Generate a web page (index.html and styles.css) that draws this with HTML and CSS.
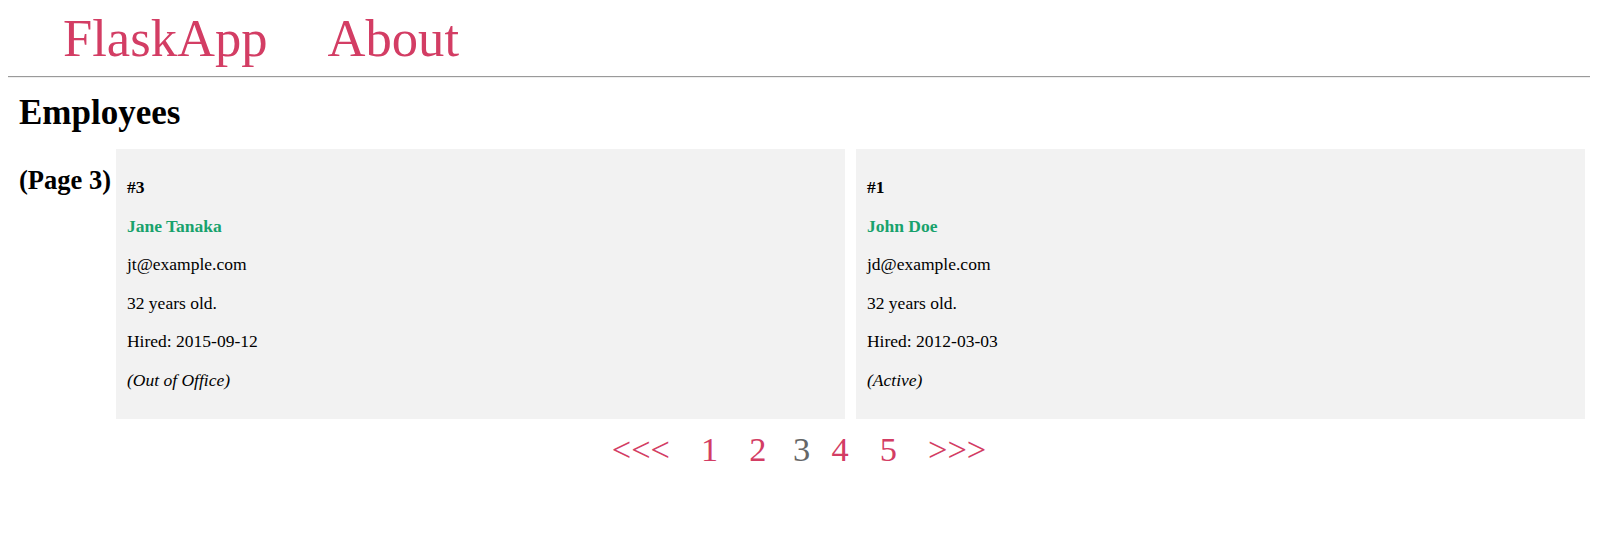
FILE: index.html
```html
<!DOCTYPE html>
<html lang="en">
<head>
<meta charset="utf-8">
<title>FlaskApp</title>
<link rel="stylesheet" href="styles.css">
</head>
<body>
<nav class="nav">
  <a class="nav-link" href="#">FlaskApp</a>
  <a class="nav-link" href="#">About</a>
</nav>
<hr class="rule">
<main class="main">
  <h1 class="title">Employees</h1>
  <div class="content">
    <h2 class="page-label">(Page 3)</h2>
    <div class="cards">
      <div class="card">
        <p class="emp-id">#3</p>
        <p class="emp-name">Jane Tanaka</p>
        <p>jt@example.com</p>
        <p>32 years old.</p>
        <p>Hired: 2015-09-12</p>
        <p class="emp-status">(Out of Office)</p>
      </div>
      <div class="card">
        <p class="emp-id">#1</p>
        <p class="emp-name">John Doe</p>
        <p>jd@example.com</p>
        <p>32 years old.</p>
        <p>Hired: 2012-03-03</p>
        <p class="emp-status">(Active)</p>
      </div>
    </div>
  </div>
</main>
<div class="pagination">
  <a class="page-link" href="#">&lt;&lt;&lt;</a>
  <a class="page-link" href="#">1</a>
  <a class="page-link" href="#">2</a>
  <span class="page-current">3</span>
  <a class="page-link" href="#">4</a>
  <a class="page-link" href="#">5</a>
  <a class="page-link" href="#">&gt;&gt;&gt;</a>
</div>
</body>
</html>
```
FILE: styles.css
```css
html, body {
  background: #ffffff;
}

body {
  margin: 8px;
  font-family: "Liberation Serif", "Times New Roman", serif;
  font-size: 17.5px;
  color: #000;
}

.nav {
  display: flex;
  gap: 60px;
  padding-left: 55px;
  font-size: 52.6px;
  line-height: normal;
}

.nav-link {
  color: #d33d64;
  text-decoration: none;
}

.rule {
  margin: 8px 0 0;
  border: none;
  border-top: 1px solid #9a9a9a;
  border-bottom: 1px solid #eeeeee;
  height: 0;
}

.main {
  padding: 0 5px 0 11px;
}

.title {
  margin: 15px 0 16px;
  font-size: 35px;
  font-weight: bold;
  line-height: normal;
}

.content {
  display: flex;
  align-items: flex-start;
}

.page-label {
  margin: 16px 5px 0 0;
  font-size: 26.5px;
  font-weight: bold;
  line-height: normal;
  white-space: nowrap;
}

.cards {
  flex: 1;
  display: grid;
  grid-template-columns: 1fr 1fr;
  gap: 11px;
}

.card {
  background: #f2f2f2;
  padding: 11px;
}

.card p {
  margin: 17.2px 0;
  line-height: 21.3px;
}

.emp-id {
  font-weight: bold;
}

.emp-name {
  font-weight: bold;
  color: #18a26d;
}

.emp-status {
  font-style: italic;
}

.pagination {
  display: flex;
  justify-content: center;
  margin-top: 11px;
  font-size: 34.4px;
  line-height: normal;
}

.page-link {
  color: #d33d64;
  text-decoration: none;
  padding: 0 15.5px;
}

.page-current {
  color: #666666;
  margin: 0 6px 0 11px;
}
```
